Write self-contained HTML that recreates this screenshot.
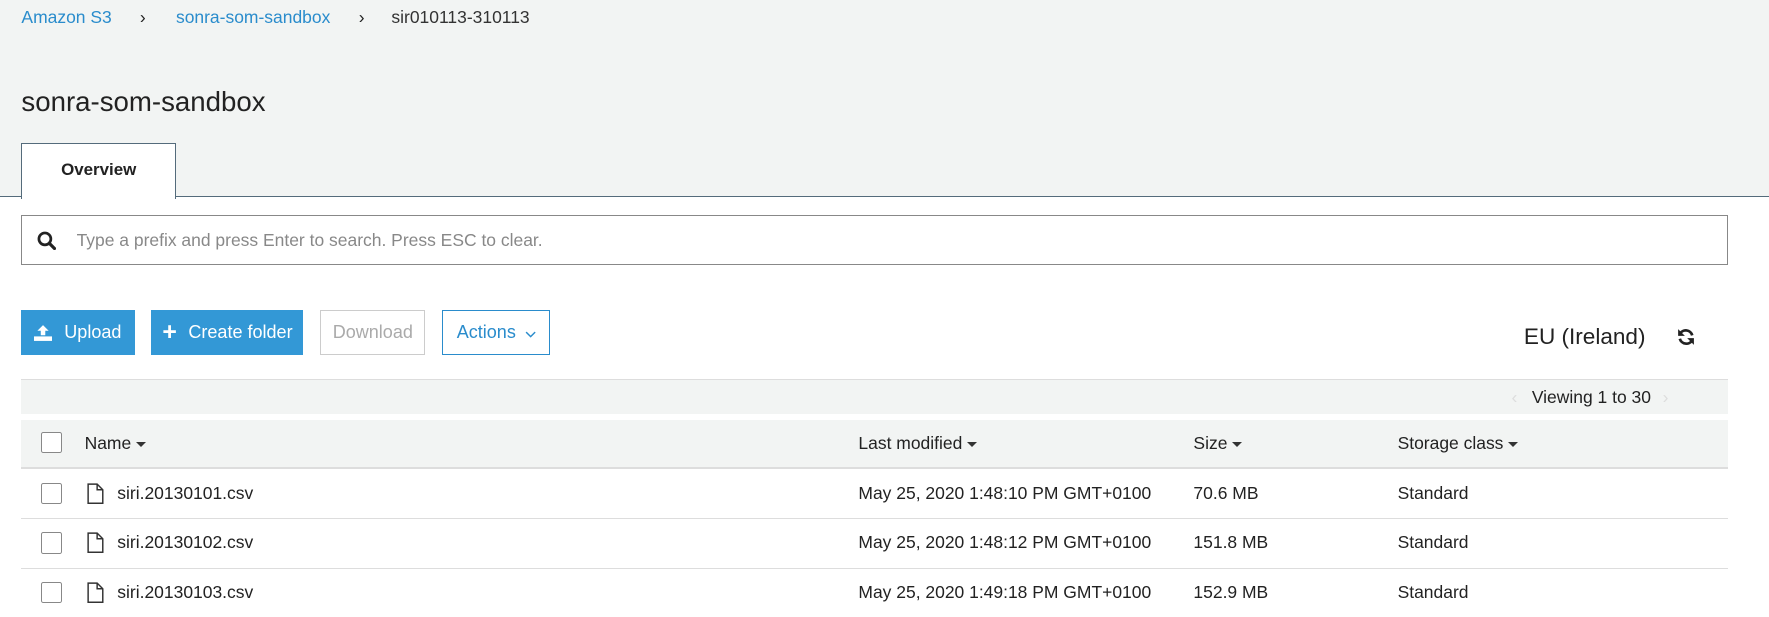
<!DOCTYPE html>
<html><head><style>
*{box-sizing:border-box;margin:0;padding:0}
html,body{width:1769px;height:617px;overflow:hidden;background:#fff}
#w{zoom:1.128;width:1569px;height:547px;position:relative;overflow:hidden;font-family:"Liberation Sans",Arial,sans-serif;color:#222}
.hdr{position:absolute;left:0;top:0;width:1569px;height:175px;background:#f2f4f3;border-bottom:1px solid #546b7b}
.a{position:absolute;white-space:nowrap}
.bc{top:6px;font-size:15.5px}
.link{color:#2a8ccc}
.tab{position:absolute;left:19px;top:127px;width:137px;height:49px;background:#fff;border:1px solid #546b7b;border-bottom:none;font-weight:bold;font-size:15px;text-align:center;line-height:46px}
.search{position:absolute;left:19px;top:191px;width:1513px;height:44px;border:1px solid #888}
.btn{position:absolute;top:275px;height:40px;font-size:16px;line-height:40px;color:#fff;background:#3398d6}
.viewbar{position:absolute;left:19px;top:336px;width:1513px;height:31px;background:#f2f4f3;border-top:1px solid #ddd}
.thead{position:absolute;left:19px;top:372px;width:1513px;height:44px;background:#f2f4f3;border-bottom:2px solid #ddd}
.row{position:absolute;left:19px;width:1513px;height:44px;border-bottom:1px solid #ddd;font-size:15.5px}
.cb{position:absolute;left:17px;width:19px;height:19px;border:1px solid #888;border-radius:2px;background:#fff}
.th{font-size:15.5px;top:384px}
.t{font-size:15.5px}
.tri{display:inline-block;width:0;height:0;border-left:5px solid transparent;border-right:5px solid transparent;border-top:5px solid #333;vertical-align:middle;margin-left:4px}
</style></head><body><div id="w">
<div class="hdr"></div>
<div class="a bc link" style="left:19px">Amazon S3</div>
<div class="a bc" style="left:124px">›</div>
<div class="a bc link" style="left:156px">sonra-som-sandbox</div>
<div class="a bc" style="left:318px">›</div>
<div class="a bc" style="left:347px;color:#333">sir010113-310113</div>
<div class="a" style="left:19px;top:76px;font-size:24.5px">sonra-som-sandbox</div>
<div class="tab">Overview</div>
<div class="search">
<svg style="position:absolute;left:13px;top:13px" width="17" height="17" viewBox="0 0 17 17"><circle cx="7" cy="7" r="5.3" fill="none" stroke="#222" stroke-width="2.4"/><path d="M11 11l4.5 4.5" stroke="#222" stroke-width="2.8" stroke-linecap="round"/></svg>
<div class="a" style="left:48px;top:12px;font-size:15.5px;color:#888">Type a prefix and press Enter to search. Press ESC to clear.</div>
</div>
<div class="btn" style="left:19px;width:101px">
<svg style="position:absolute;left:11px;top:12px" width="16" height="16" viewBox="0 0 16 16"><path d="M8 1l-5 5h3v4h4V6h3z" fill="#fff"/><rect x="0" y="11" width="16" height="4" fill="#fff"/></svg>
<span class="a" style="left:38px">Upload</span></div>
<div class="btn" style="left:134px;width:135px"><span class="a" style="left:10px;font-weight:bold;font-size:22px">+</span><span class="a" style="left:33px">Create folder</span></div>
<div class="btn" style="left:284px;width:93px;background:#fff;border:1px solid #ccc;color:#aaa;line-height:38px;text-align:center">Download</div>
<div class="btn" style="left:392px;width:96px;background:#fff;border:1px solid #2a8ccc;color:#2a8ccc;line-height:38px;padding-left:12px">Actions <svg width="10" height="6" viewBox="0 0 10 6" style="margin-left:4px"><path d="M1 1l4 4 4-4" fill="none" stroke="#2a8ccc" stroke-width="1.3"/></svg></div>
<div class="a" style="left:1351px;top:287px;font-size:20px">EU (Ireland)</div>
<svg class="a" style="left:1487px;top:291px" width="16" height="16" viewBox="0 0 16 16"><path d="M13.5 6.5A6 6 0 0 0 2.6 5" fill="none" stroke="#222" stroke-width="2.4"/><path d="M1 1v6h6z" fill="#222"/><path d="M2.5 9.5A6 6 0 0 0 13.4 11" fill="none" stroke="#222" stroke-width="2.4"/><path d="M15 15V9h-6z" fill="#222"/></svg>
<div class="viewbar"></div>
<div class="a t" style="left:1340px;top:343px;color:#ddd">‹</div>
<div class="a t" style="left:1358px;top:343px">Viewing 1 to 30</div>
<div class="a t" style="left:1474px;top:343px;color:#ddd">›</div>
<div class="thead"><div class="cb" style="top:11px"></div></div>
<div class="a th" style="left:75px">Name<span class="tri"></span></div>
<div class="a th" style="left:761px">Last modified<span class="tri"></span></div>
<div class="a th" style="left:1058px">Size<span class="tri"></span></div>
<div class="a th" style="left:1239px">Storage class<span class="tri"></span></div>
<div class="row" style="top:416px"><div class="cb" style="top:12px"></div></div>
<div class="row" style="top:460px"><div class="cb" style="top:12px"></div></div>
<div class="row" style="top:504px"><div class="cb" style="top:12px"></div></div>
<svg class="a" style="left:77px;top:428px" width="15" height="19" viewBox="0 0 15 19"><path d="M1 1h8l5 5v12H1z M9 1v5h5" fill="none" stroke="#333" stroke-width="1.3"/></svg>
<svg class="a" style="left:77px;top:472px" width="15" height="19" viewBox="0 0 15 19"><path d="M1 1h8l5 5v12H1z M9 1v5h5" fill="none" stroke="#333" stroke-width="1.3"/></svg>
<svg class="a" style="left:77px;top:516px" width="15" height="19" viewBox="0 0 15 19"><path d="M1 1h8l5 5v12H1z M9 1v5h5" fill="none" stroke="#333" stroke-width="1.3"/></svg>
<div class="a t" style="left:104px;top:428px">siri.20130101.csv</div>
<div class="a t" style="left:761px;top:428px">May 25, 2020 1:48:10 PM GMT+0100</div>
<div class="a t" style="left:1058px;top:428px">70.6 MB</div>
<div class="a t" style="left:1239px;top:428px">Standard</div>
<div class="a t" style="left:104px;top:472px">siri.20130102.csv</div>
<div class="a t" style="left:761px;top:472px">May 25, 2020 1:48:12 PM GMT+0100</div>
<div class="a t" style="left:1058px;top:472px">151.8 MB</div>
<div class="a t" style="left:1239px;top:472px">Standard</div>
<div class="a t" style="left:104px;top:516px">siri.20130103.csv</div>
<div class="a t" style="left:761px;top:516px">May 25, 2020 1:49:18 PM GMT+0100</div>
<div class="a t" style="left:1058px;top:516px">152.9 MB</div>
<div class="a t" style="left:1239px;top:516px">Standard</div>
</div></body></html>
